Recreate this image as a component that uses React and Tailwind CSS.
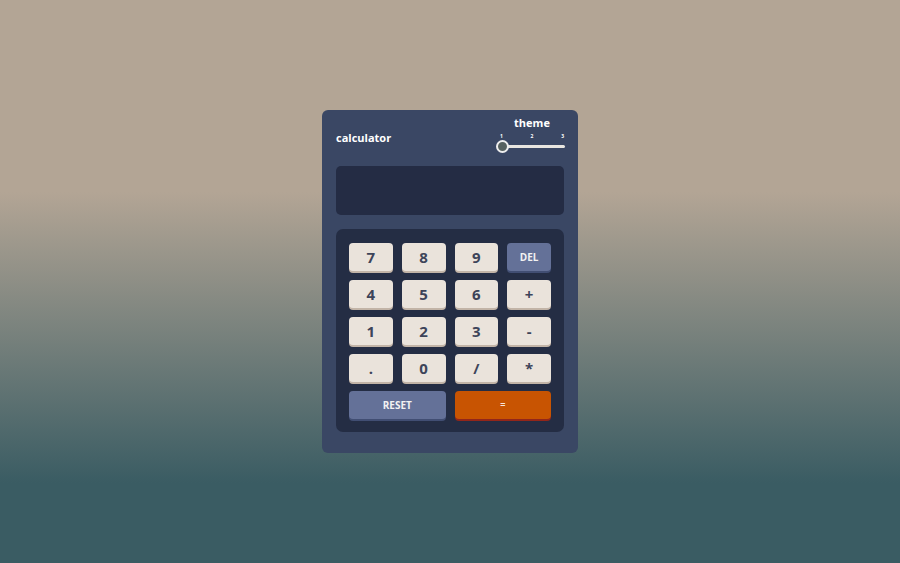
import React from "react";

const Key = ({ children, variant = "num", wide = false }) => {
  const base =
    "h-[28px] rounded-[4px] flex items-center justify-center font-bold";
  const styles = {
    num: "bg-[#eae3db] text-[#3d4459] shadow-[0_2px_0_#c2b4a7] text-[15px]",
    del: "bg-[#647198] text-[#f2f2f2] shadow-[0_2px_0_#414e73] text-[10px]",
    reset: "bg-[#647198] text-[#f2f2f2] shadow-[0_2px_0_#414e73] text-[10px]",
    eq: "bg-[#c85402] text-[#f8e6de] shadow-[0_2px_0_#93261a] text-[9px]",
  };
  return (
    <div className={`${base} ${styles[variant]} ${wide ? "col-span-2" : ""}`}>
      {children}
    </div>
  );
};

export default function App() {
  return (
    <div
      className="w-[900px] h-[563px] flex items-start justify-center bg-[linear-gradient(to_bottom,#b3a595_0px,#b3a595_192px,#3a5c63_483px,#3a5c63_563px)]"
      style={{ fontFamily: "'Open Sans', 'Noto Sans', sans-serif" }}
    >
      <div className="mt-[110px] w-[256px] h-[343px] rounded-[6px] bg-[#3a4764] px-[14px] pt-[7px]">
        <div className="flex justify-between items-start h-[42px]">
          <div className="mt-[15px] text-white font-bold text-[11px] leading-none">
            calculator
          </div>
          <div className="w-[66px] flex flex-col items-center mr-[-1px]">
            <div className="text-white font-bold text-[11px] leading-none">
              theme
            </div>
            <div className="w-full flex justify-between px-[1px] text-white text-[5px] font-bold leading-none mt-[6px]">
              <span>1</span>
              <span>2</span>
              <span>3</span>
            </div>
            <div className="relative w-full h-[3px] bg-[#e8e6e1] rounded-full mt-[6px]">
              <div className="absolute left-[-3px] top-[-5px] w-[13px] h-[13px] rounded-full bg-[#56615f] border-[2px] border-[#eeeeee]" />
            </div>
          </div>
        </div>
        <div className="mt-[7px] h-[49px] rounded-[5px] bg-[#242c44]" />
        <div className="mt-[14px] h-[203px] rounded-[7px] bg-[#242d44] px-[13px] pt-[14px]">
          <div className="grid grid-cols-4 gap-x-[9px] gap-y-[9px]">
            <Key>7</Key>
            <Key>8</Key>
            <Key>9</Key>
            <Key variant="del">DEL</Key>
            <Key>4</Key>
            <Key>5</Key>
            <Key>6</Key>
            <Key>+</Key>
            <Key>1</Key>
            <Key>2</Key>
            <Key>3</Key>
            <Key>-</Key>
            <Key>.</Key>
            <Key>0</Key>
            <Key>/</Key>
            <Key>*</Key>
            <Key variant="reset" wide>
              RESET
            </Key>
            <Key variant="eq" wide>
              =
            </Key>
          </div>
        </div>
      </div>
    </div>
  );
}
